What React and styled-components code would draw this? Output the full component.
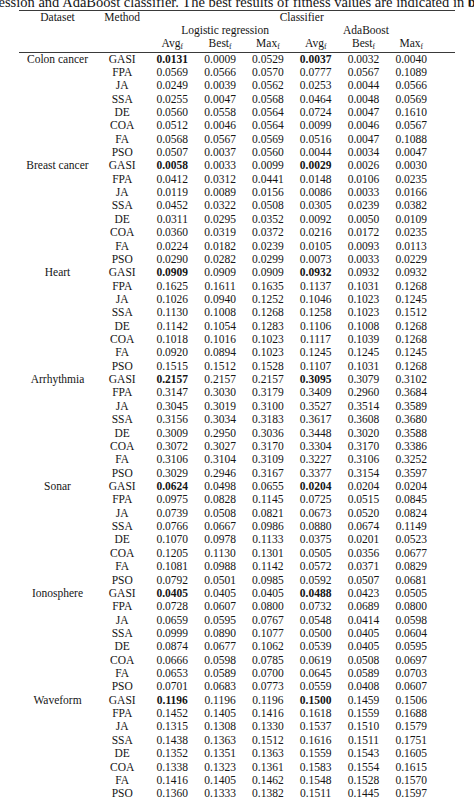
import styled, { createGlobalStyle } from "styled-components";

const Global = createGlobalStyle`
  html, body {
    margin: 0;
    padding: 0;
    background: #fff;
    overflow: hidden;
  }
  #root {
    width: 474px;
    height: 800px;
    overflow: hidden;
  }
`;

const Page = styled.div`
  font-family: "Liberation Serif", "Times New Roman", serif;
  color: #151515;
`;

const Caption = styled.div`
  height: 15.6px;
  margin-top: -5.6px;
  overflow: hidden;
  white-space: nowrap;
  font-size: 14.5px;
  line-height: 16px;
  text-indent: -24.8px;
`;

const Table = styled.table`
  margin-left: 19px;
  width: 436px;
  table-layout: fixed;
  border-collapse: separate;
  border-spacing: 0;
  border-top: 1px solid #3a3a3a;
  font-size: 11.5px;
`;

const Head = styled.th`
  padding: 0;
  padding-left: ${(p) => p.$indent || 0}px;
  font-weight: normal;
  text-align: center;
  vertical-align: top;
  white-space: nowrap;
`;

const TitleRow = styled.tr`
  & > th {
    line-height: 13px;
  }
`;

const GroupRow = styled.tr`
  & > th {
    line-height: 12.7px;
  }
`;

const MetricRow = styled.tr`
  & > th {
    line-height: 13px;
    padding-bottom: 1.8px;
    border-bottom: 1px solid #3a3a3a;
  }
`;

const Sub = styled.span`
  font-size: 7.5px;
  vertical-align: -2px;
  line-height: 0;
`;

const Cell = styled.td`
  padding: 0;
  line-height: 13.36px;
  text-align: center;
  vertical-align: top;
  white-space: nowrap;
  font-weight: ${(p) => (p.$best ? "bold" : "normal")};
`;

const methods = ["GASI", "FPA", "JA", "SSA", "DE", "COA", "FA", "PSO"];

const datasets = [
  {
    name: "Colon cancer",
    rows: [
      "0.0131 0.0009 0.0529 0.0037 0.0032 0.0040",
      "0.0569 0.0566 0.0570 0.0777 0.0567 0.1089",
      "0.0249 0.0039 0.0562 0.0253 0.0044 0.0566",
      "0.0255 0.0047 0.0568 0.0464 0.0048 0.0569",
      "0.0560 0.0558 0.0564 0.0724 0.0047 0.1610",
      "0.0512 0.0046 0.0564 0.0099 0.0046 0.0567",
      "0.0568 0.0567 0.0569 0.0516 0.0047 0.1088",
      "0.0507 0.0037 0.0560 0.0044 0.0034 0.0047",
    ],
  },
  {
    name: "Breast cancer",
    rows: [
      "0.0058 0.0033 0.0099 0.0029 0.0026 0.0030",
      "0.0412 0.0312 0.0441 0.0148 0.0106 0.0235",
      "0.0119 0.0089 0.0156 0.0086 0.0033 0.0166",
      "0.0452 0.0322 0.0508 0.0305 0.0239 0.0382",
      "0.0311 0.0295 0.0352 0.0092 0.0050 0.0109",
      "0.0360 0.0319 0.0372 0.0216 0.0172 0.0235",
      "0.0224 0.0182 0.0239 0.0105 0.0093 0.0113",
      "0.0290 0.0282 0.0299 0.0073 0.0033 0.0229",
    ],
  },
  {
    name: "Heart",
    rows: [
      "0.0909 0.0909 0.0909 0.0932 0.0932 0.0932",
      "0.1625 0.1611 0.1635 0.1137 0.1031 0.1268",
      "0.1026 0.0940 0.1252 0.1046 0.1023 0.1245",
      "0.1130 0.1008 0.1268 0.1258 0.1023 0.1512",
      "0.1142 0.1054 0.1283 0.1106 0.1008 0.1268",
      "0.1018 0.1016 0.1023 0.1117 0.1039 0.1268",
      "0.0920 0.0894 0.1023 0.1245 0.1245 0.1245",
      "0.1515 0.1512 0.1528 0.1107 0.1031 0.1268",
    ],
  },
  {
    name: "Arrhythmia",
    rows: [
      "0.2157 0.2157 0.2157 0.3095 0.3079 0.3102",
      "0.3147 0.3030 0.3179 0.3409 0.2960 0.3684",
      "0.3045 0.3019 0.3100 0.3527 0.3514 0.3589",
      "0.3156 0.3034 0.3183 0.3617 0.3608 0.3680",
      "0.3009 0.2950 0.3036 0.3448 0.3020 0.3588",
      "0.3072 0.3027 0.3170 0.3304 0.3170 0.3386",
      "0.3106 0.3104 0.3109 0.3227 0.3106 0.3252",
      "0.3029 0.2946 0.3167 0.3377 0.3154 0.3597",
    ],
  },
  {
    name: "Sonar",
    rows: [
      "0.0624 0.0498 0.0655 0.0204 0.0204 0.0204",
      "0.0975 0.0828 0.1145 0.0725 0.0515 0.0845",
      "0.0739 0.0508 0.0821 0.0673 0.0520 0.0824",
      "0.0766 0.0667 0.0986 0.0880 0.0674 0.1149",
      "0.1070 0.0978 0.1133 0.0375 0.0201 0.0523",
      "0.1205 0.1130 0.1301 0.0505 0.0356 0.0677",
      "0.1081 0.0988 0.1142 0.0572 0.0371 0.0829",
      "0.0792 0.0501 0.0985 0.0592 0.0507 0.0681",
    ],
  },
  {
    name: "Ionosphere",
    rows: [
      "0.0405 0.0405 0.0405 0.0488 0.0423 0.0505",
      "0.0728 0.0607 0.0800 0.0732 0.0689 0.0800",
      "0.0659 0.0595 0.0767 0.0548 0.0414 0.0598",
      "0.0999 0.0890 0.1077 0.0500 0.0405 0.0604",
      "0.0874 0.0677 0.1062 0.0539 0.0405 0.0595",
      "0.0666 0.0598 0.0785 0.0619 0.0508 0.0697",
      "0.0653 0.0589 0.0700 0.0645 0.0589 0.0703",
      "0.0701 0.0683 0.0773 0.0559 0.0408 0.0607",
    ],
  },
  {
    name: "Waveform",
    rows: [
      "0.1196 0.1196 0.1196 0.1500 0.1459 0.1506",
      "0.1452 0.1405 0.1416 0.1618 0.1559 0.1688",
      "0.1315 0.1308 0.1330 0.1537 0.1510 0.1579",
      "0.1438 0.1363 0.1512 0.1616 0.1511 0.1751",
      "0.1352 0.1351 0.1363 0.1559 0.1543 0.1605",
      "0.1338 0.1323 0.1361 0.1583 0.1554 0.1615",
      "0.1416 0.1405 0.1462 0.1548 0.1528 0.1570",
      "0.1360 0.1333 0.1382 0.1511 0.1445 0.1597",
    ],
  },
];

const metrics = ["Avg", "Best", "Max", "Avg", "Best", "Max"];

function App() {
  return (
    <Page>
      <Global />
      <Caption>
        regression and AdaBoost classifier. The best results of fitness values
        are indicated in <b>bold</b>.
      </Caption>
      <Table>
        <colgroup>
          <col style={{ width: 77 }} />
          <col style={{ width: 52.4 }} />
          {metrics.map((m, i) => (
            <col key={i} style={{ width: 47.8 }} />
          ))}
          <col style={{ width: 19.8 }} />
        </colgroup>
        <thead>
          <TitleRow>
            <Head>Dataset</Head>
            <Head>Method</Head>
            <Head colSpan={7}>Classifier</Head>
          </TitleRow>
          <GroupRow>
            <Head />
            <Head />
            <Head colSpan={3} $indent={10}>
              Logistic regression
            </Head>
            <Head colSpan={3} $indent={5}>
              AdaBoost
            </Head>
            <Head />
          </GroupRow>
          <MetricRow>
            <Head />
            <Head />
            {metrics.map((m, i) => (
              <Head key={i}>
                {m}
                <Sub>f</Sub>
              </Head>
            ))}
            <Head />
          </MetricRow>
        </thead>
        <tbody>
          {datasets.map((d) =>
            d.rows.map((r, i) => (
              <tr key={d.name + i}>
                <Cell>{i === 0 ? d.name : ""}</Cell>
                <Cell>{methods[i]}</Cell>
                {r.split(" ").map((v, j) => (
                  <Cell key={j} $best={i === 0 && (j === 0 || j === 3)}>
                    {v}
                  </Cell>
                ))}
                <Cell />
              </tr>
            ))
          )}
        </tbody>
      </Table>
    </Page>
  );
}

export default App;
